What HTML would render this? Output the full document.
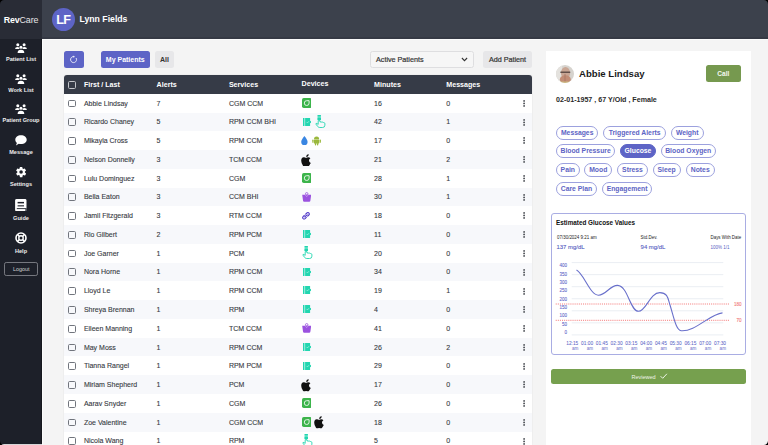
<!DOCTYPE html>
<html><head><meta charset="utf-8"><title>RevCare</title>
<style>
*{margin:0;padding:0;box-sizing:border-box}
html,body{width:768px;height:445px;overflow:hidden;background:#f4f4f4;font-family:"Liberation Sans",sans-serif}
.abs{position:absolute}
#side{position:absolute;left:0;top:0;width:42px;height:445px;background:#1d2029}
#logo{position:absolute;left:0;top:0;width:42px;height:38.6px;background:#292c36;color:#fff;font-size:8.9px;line-height:40px;text-align:center;letter-spacing:-0.15px}
.nicon{position:absolute;left:0;width:42px;text-align:center;line-height:0}
.nlab{position:absolute;left:0;width:42px;text-align:center;color:#ededed;font-size:5.6px;font-weight:700;line-height:8.6px;white-space:nowrap}
#logout{position:absolute;left:4.1px;top:262.2px;width:34.2px;height:14px;border:0.9px solid #76787f;border-radius:2.2px;color:#d0d0d2;font-size:5.4px;line-height:12.2px;text-align:center}
#head{position:absolute;left:42px;top:0;width:726px;height:38.6px;background:#3c414c}
#av{position:absolute;left:52px;top:7.6px;width:23px;height:23px;border-radius:50%;background:#5d64c6;color:#fff;font-weight:700;font-size:12.6px;line-height:24px;text-align:center;letter-spacing:-0.6px;text-indent:-0.5px}
#uname{position:absolute;left:79.5px;top:13px;color:#fff;font-weight:700;font-size:8.7px;line-height:12px}
.btn{position:absolute;top:51px;height:17px;border-radius:2.5px;font-size:7px;line-height:17px;text-align:center}
#tbl{position:absolute;left:64px;top:75px;width:468px;height:370px;background:#fff;border-radius:3px 3px 0 0;overflow:hidden;box-shadow:0 0 1.5px rgba(0,0,0,0.12)}
#th{position:absolute;left:0;top:0;width:468px;height:18.765px;background:#363b47;color:#fff;font-weight:700;font-size:7.1px}
.row{position:absolute;left:0;width:468px;height:18.765px;color:#353840;font-size:7px;-webkit-text-stroke:0.1px #353840}
.row span,#th span{position:absolute;top:0.85px;line-height:18.765px;white-space:nowrap}
.cb{left:4.3px;top:5.8px!important;width:7.7px;height:7.8px;border:1px solid #71757d;border-radius:1.6px;}
#th .cb{border-color:#c3c5ca}
.c1{left:19.9px} .c2{left:92.6px} .c3{left:164.9px} .c4{left:237.6px;top:-0.3px!important;display:flex;align-items:center;height:18.765px;gap:3.5px} .c5{left:310.1px} .c6{left:382.3px}
.ic{display:block}
.kb{left:458.9px;top:6.1px!important;width:2.2px;height:7px;line-height:0!important}
.kb i{display:block;width:1.9px;height:1.7px;background:#45484f;border-radius:0.4px;margin-bottom:0.8px}
#panel{position:absolute;left:546px;top:51px;width:205px;height:394px;background:#fff}
.chip{position:absolute;height:14px;border:1px solid #9ca1de;border-radius:7px;color:#5d64c4;font-size:6.8px;font-weight:700;line-height:12.8px;text-align:center;white-space:nowrap}
.chip.on{background:#5d64c6;border-color:#5d64c6;color:#fff}
#card{position:absolute;left:550.8px;top:212.9px;width:195.2px;height:142.6px;border:1px solid #a9ade3;border-radius:3px;background:#fff}
</style></head><body>
<div id="side">
<div id="logo"><b>Rev</b><span style="color:#e6e6e8">Care</span></div>
<div class="nicon" style="top:43px"><svg width="12" height="10" viewBox="0 0 12 10" style="margin-left:-0.3px"><g fill="#fff"><circle cx="2.8" cy="1.75" r="1.5"/><circle cx="9.1" cy="1.75" r="1.5"/><path d="M0.1 6.1 A2.45 2.15 0 0 1 5.0 6.1 Z"/><path d="M7.0 6.1 A2.45 2.15 0 0 1 11.9 6.1 Z"/></g><g fill="#fff" stroke="#1d2029" stroke-width="1.1" paint-order="stroke fill"><circle cx="5.95" cy="4.3" r="1.5"/><path d="M2.6 9.9 Q2.6 6.8 5.95 6.8 Q9.3 6.8 9.3 9.9 Z"/></g></svg></div><div class="nlab" style="top:55px">Patient List</div>
<div class="nicon" style="top:74px"><svg width="12" height="10" viewBox="0 0 12 10" style="margin-left:-0.3px"><g fill="#fff"><circle cx="2.8" cy="1.75" r="1.5"/><circle cx="9.1" cy="1.75" r="1.5"/><path d="M0.1 6.1 A2.45 2.15 0 0 1 5.0 6.1 Z"/><path d="M7.0 6.1 A2.45 2.15 0 0 1 11.9 6.1 Z"/></g><g fill="#fff" stroke="#1d2029" stroke-width="1.1" paint-order="stroke fill"><circle cx="5.95" cy="4.3" r="1.5"/><path d="M2.6 9.9 Q2.6 6.8 5.95 6.8 Q9.3 6.8 9.3 9.9 Z"/></g></svg></div><div class="nlab" style="top:85.5px">Work List</div>
<div class="nicon" style="top:103.5px"><svg width="12" height="10" viewBox="0 0 12 10" style="margin-left:-0.3px"><g fill="#fff"><circle cx="2.8" cy="1.75" r="1.5"/><circle cx="9.1" cy="1.75" r="1.5"/><path d="M0.1 6.1 A2.45 2.15 0 0 1 5.0 6.1 Z"/><path d="M7.0 6.1 A2.45 2.15 0 0 1 11.9 6.1 Z"/></g><g fill="#fff" stroke="#1d2029" stroke-width="1.1" paint-order="stroke fill"><circle cx="5.95" cy="4.3" r="1.5"/><path d="M2.6 9.9 Q2.6 6.8 5.95 6.8 Q9.3 6.8 9.3 9.9 Z"/></g></svg></div><div class="nlab" style="top:115.5px">Patient Group</div>
<div class="nicon" style="top:134.5px"><svg width="12" height="11" viewBox="0 0 12 11"><path d="M6 0.3 C9.3 0.3 11.7 2.3 11.7 4.7 C11.7 7.1 9.3 9.1 6 9.1 C5.2 9.1 4.5 9 3.8 8.8 L0.9 10.5 L1.9 8 C0.9 7.1 0.3 6 0.3 4.7 C0.3 2.3 2.7 0.3 6 0.3 Z" fill="#fff"/></svg></div><div class="nlab" style="top:148px">Message</div>
<div class="nicon" style="top:165.5px"><svg width="12.2" height="12.2" viewBox="0 0 24 24"><path fill="#fff" d="M19.4 13a7.6 7.6 0 0 0 0-2l2.1-1.6a.5.5 0 0 0 .1-.6l-2-3.5a.5.5 0 0 0-.6-.2l-2.5 1a7.3 7.3 0 0 0-1.7-1L14.4 2.4A.5.5 0 0 0 14 2h-4a.5.5 0 0 0-.5.4L9.1 5.1a7.3 7.3 0 0 0-1.7 1l-2.5-1a.5.5 0 0 0-.6.2l-2 3.5a.5.5 0 0 0 .1.6L4.6 11a7.6 7.6 0 0 0 0 2l-2.1 1.6a.5.5 0 0 0-.1.6l2 3.5a.5.5 0 0 0 .6.2l2.5-1a7.3 7.3 0 0 0 1.7 1l.4 2.7a.5.5 0 0 0 .5.4h4a.5.5 0 0 0 .5-.4l.4-2.7a7.3 7.3 0 0 0 1.7-1l2.5 1a.5.5 0 0 0 .6-.2l2-3.5a.5.5 0 0 0-.1-.6zM12 15.5A3.5 3.5 0 1 1 15.5 12 3.5 3.5 0 0 1 12 15.5z"/></svg></div><div class="nlab" style="top:180px">Settings</div>
<div class="nicon" style="top:198.8px"><svg width="11.6" height="12.4" viewBox="0 0 11.6 12.4"><path d="M1.6 0 H10 Q11.5 0 11.5 1.5 V12.3 H1.6 Q0.1 12.3 0.1 10.8 V1.5 Q0.1 0 1.6 0 Z" fill="#fff"/><rect x="2.6" y="2.9" width="6.4" height="1.5" fill="#1d2029"/><rect x="2.6" y="6.3" width="6.4" height="1.1" fill="#1d2029"/><rect x="1.8" y="9.2" width="9.8" height="0.9" fill="#1d2029"/><rect x="10.4" y="10.1" width="1.2" height="2.3" fill="#1d2029"/></svg></div><div class="nlab" style="top:214px">Guide</div>
<div class="nicon" style="top:231.8px"><svg width="12" height="12" viewBox="0 0 12 12"><circle cx="6" cy="6" r="5" fill="none" stroke="#fff" stroke-width="1.6"/><circle cx="6" cy="6" r="2.2" fill="none" stroke="#fff" stroke-width="1.4"/><path d="M2.6 2.6 L4.4 4.4 M9.4 2.6 L7.6 4.4 M2.6 9.4 L4.4 7.6 M9.4 9.4 L7.6 7.6" stroke="#fff" stroke-width="1.4"/></svg></div><div class="nlab" style="top:246.5px">Help</div>

<div id="logout">Logout</div>
</div>
<div id="head"></div><div class="abs" style="left:42px;top:38.6px;width:726px;height:1px;background:#fbfbfb"></div><div class="abs" style="left:42px;top:38.6px;width:1px;height:407px;background:#fbfbfb"></div><div class="abs" style="left:40.9px;top:38.6px;width:1.1px;height:407px;background:#15171d"></div><div class="abs" style="left:42px;top:37px;width:726px;height:1.6px;background:#363a45"></div>
<div id="av">LF</div>
<div id="uname">Lynn Fields</div>

<div class="btn" style="left:64px;width:20.2px;background:#5d64c6;line-height:0">
<svg width="20.2" height="17" viewBox="0 0 20.2 17"><path d="M9.6 5.6 A3 3 0 1 0 12.1 7.0" fill="none" stroke="#e9eaf8" stroke-width="0.95"/><circle cx="9.7" cy="5.6" r="0.95" fill="#e9eaf8"/></svg></div>
<div class="btn" style="left:100.5px;width:49.5px;background:#5d64c6;color:#fff;font-weight:700">My Patients</div>
<div class="btn" style="left:155px;width:19px;background:#e7e7e9;color:#333;font-weight:700">All</div>
<div class="btn" style="left:369.5px;width:104px;background:#f6f6f6;border:1px solid #dedee0;color:#333;text-align:left;padding-left:5.5px;line-height:15px;font-size:7.2px;-webkit-text-stroke:0.2px #333">Active Patients
<svg style="position:absolute;left:90.5px;top:5.2px" width="7" height="5" viewBox="0 0 7 5"><path d="M0.9 1 L3.5 3.6 L6.1 1" fill="none" stroke="#333" stroke-width="1.1"/></svg></div>
<div class="btn" style="left:483px;width:49px;background:#e7e7e9;color:#333;font-size:7.2px;-webkit-text-stroke:0.2px #333">Add Patient</div>

<div id="tbl">
<div id="th"><span class="cb"></span><span class="c1">First / Last</span><span class="c2">Alerts</span><span class="c3">Services</span><span class="c4">Devices</span><span class="c5">Minutes</span><span class="c6">Messages</span></div>
<div class="row" style="top:18.77px;background:#ffffff"><span class="cb"></span><span class="c1">Abbie Lindsay</span><span class="c2">7</span><span class="c3">CGM CCM</span><span class="c4"><svg class="ic" width="9.6" height="10" viewBox="0 0 9.6 10"><rect x="0" y="0" width="9.6" height="10" rx="1.7" fill="#3cb44b"/><path d="M4.7 2.7 H7.1 V5.1 A2.4 2.4 0 1 1 4.7 2.7 Z" fill="none" stroke="#e8f6ea" stroke-width="0.95"/></svg></span><span class="c5">16</span><span class="c6">0</span><span class="kb"><svg width="2.2" height="7" viewBox="0 0 2.2 7"><circle cx="1.1" cy="0.95" r="0.9" fill="#45484f"/><circle cx="1.1" cy="3.45" r="0.9" fill="#45484f"/><circle cx="1.1" cy="5.95" r="0.9" fill="#45484f"/></svg></span></div>
<div class="row" style="top:37.53px;background:#f7f8fb"><span class="cb"></span><span class="c1">Ricardo Chaney</span><span class="c2">5</span><span class="c3">RPM CCM BHI</span><span class="c4"><svg class="ic" width="8.4" height="8" viewBox="0 0 8.4 8" style="margin-left:1.4px"><rect x="0" y="0" width="1.5" height="8" fill="#22d6b0"/><path d="M2.1 0 H7.1 V2.7 L8.3 3.4 V4.6 L7.1 5.3 V8 H2.1 Z" fill="#22d6b0"/><path d="M3.5 3.9 L4.5 4.9 L6 3.2" fill="none" stroke="#c8f5ea" stroke-width="0.6"/></svg><svg class="ic" width="10.5" height="13" viewBox="0 0 10.5 13" style="margin-left:0.5px"><rect x="2.4" y="0.1" width="3.6" height="1.6" rx="0.4" fill="#22d6b0"/><rect x="2.4" y="2.3" width="3.6" height="2.8" rx="0.4" fill="#22d6b0"/><path d="M3.2 5.6 V9.4 L1.9 8.5 Q0.6 8.1 0.9 9.1 L2.8 11.6 Q3.6 12.5 4.8 12.5 H7.6 Q9.9 12.5 9.9 10.2 V8.7 Q9.9 7.6 8.7 7.6 Q7.8 6.8 6.8 7.2 Q6.1 6.6 5 7 V5.6 Z" fill="none" stroke="#22d6b0" stroke-width="0.9"/></svg></span><span class="c5">42</span><span class="c6">1</span><span class="kb"><svg width="2.2" height="7" viewBox="0 0 2.2 7"><circle cx="1.1" cy="0.95" r="0.9" fill="#45484f"/><circle cx="1.1" cy="3.45" r="0.9" fill="#45484f"/><circle cx="1.1" cy="5.95" r="0.9" fill="#45484f"/></svg></span></div>
<div class="row" style="top:56.30px;background:#ffffff"><span class="cb"></span><span class="c1">Mikayla Cross</span><span class="c2">5</span><span class="c3">RPM CCM</span><span class="c4"><svg class="ic" width="6.8" height="9.4" viewBox="0 0 6.8 9.4" style="margin-left:-0.3px;margin-top:0.6px"><path d="M3.4 0.1 Q6.6 3.9 6.6 6.1 A3.2 3.2 0 0 1 0.2 6.1 Q0.2 3.9 3.4 0.1 Z" fill="#3a86e2"/></svg><svg class="ic" width="9.2" height="9.4" viewBox="0 0 9.2 9.4" style="margin-left:0.2px;margin-top:1px"><path d="M2 3.2 A2.6 2.6 0 0 1 7.2 3.2 Z" fill="#9ab83c"/><rect x="2" y="3.5" width="5.2" height="4.1" rx="0.5" fill="#9ab83c"/><rect x="0.3" y="3.6" width="1.3" height="3.2" rx="0.6" fill="#9ab83c"/><rect x="7.6" y="3.6" width="1.3" height="3.2" rx="0.6" fill="#9ab83c"/><rect x="2.9" y="7" width="1.3" height="2.4" rx="0.6" fill="#9ab83c"/><rect x="5" y="7" width="1.3" height="2.4" rx="0.6" fill="#9ab83c"/></svg></span><span class="c5">17</span><span class="c6">0</span><span class="kb"><svg width="2.2" height="7" viewBox="0 0 2.2 7"><circle cx="1.1" cy="0.95" r="0.9" fill="#45484f"/><circle cx="1.1" cy="3.45" r="0.9" fill="#45484f"/><circle cx="1.1" cy="5.95" r="0.9" fill="#45484f"/></svg></span></div>
<div class="row" style="top:75.06px;background:#f7f8fb"><span class="cb"></span><span class="c1">Nelson Donnelly</span><span class="c2">3</span><span class="c3">TCM CCM</span><span class="c4"><svg class="ic" width="10.2" height="12.8" viewBox="0 0 10.2 12.8" style="margin-top:1.6px;margin-left:-0.4px"><path d="M5.1 3.2 Q5.1 0.8 7.6 0.1 Q7.9 2.6 5.1 3.2 Z" fill="#111"/><path d="M5.1 3.9 Q3.9 3.2 2.7 3.3 Q0.2 3.6 0.2 6.8 Q0.3 9.6 2 11.7 Q2.8 12.6 3.7 12.3 Q4.4 12 5.1 12 Q5.8 12 6.5 12.3 Q7.4 12.6 8.1 11.7 Q9.2 10.4 9.8 9 Q8 8.2 8 6.5 Q8 5.1 9.4 4.3 Q8.5 3.2 7.1 3.3 Q6.1 3.3 5.1 3.9 Z" fill="#111"/></svg></span><span class="c5">21</span><span class="c6">2</span><span class="kb"><svg width="2.2" height="7" viewBox="0 0 2.2 7"><circle cx="1.1" cy="0.95" r="0.9" fill="#45484f"/><circle cx="1.1" cy="3.45" r="0.9" fill="#45484f"/><circle cx="1.1" cy="5.95" r="0.9" fill="#45484f"/></svg></span></div>
<div class="row" style="top:93.83px;background:#ffffff"><span class="cb"></span><span class="c1">Lulu Dominguez</span><span class="c2">3</span><span class="c3">CGM</span><span class="c4"><svg class="ic" width="9.6" height="10" viewBox="0 0 9.6 10"><rect x="0" y="0" width="9.6" height="10" rx="1.7" fill="#3cb44b"/><path d="M4.7 2.7 H7.1 V5.1 A2.4 2.4 0 1 1 4.7 2.7 Z" fill="none" stroke="#e8f6ea" stroke-width="0.95"/></svg></span><span class="c5">28</span><span class="c6">1</span><span class="kb"><svg width="2.2" height="7" viewBox="0 0 2.2 7"><circle cx="1.1" cy="0.95" r="0.9" fill="#45484f"/><circle cx="1.1" cy="3.45" r="0.9" fill="#45484f"/><circle cx="1.1" cy="5.95" r="0.9" fill="#45484f"/></svg></span></div>
<div class="row" style="top:112.59px;background:#f7f8fb"><span class="cb"></span><span class="c1">Bella Eaton</span><span class="c2">3</span><span class="c3">CCM BHI</span><span class="c4"><svg class="ic" width="9.4" height="10" viewBox="0 0 9.4 10" style="margin-top:0px"><circle cx="4.7" cy="1.8" r="1.25" fill="none" stroke="#9b52df" stroke-width="0.8"/><path d="M0.2 2.8 H9.2 L8.4 8.6 Q8.3 9.8 7.2 9.8 H2.2 Q1.1 9.8 1 8.6 Z" fill="#9b52df"/><path d="M3.4 3.2 L4.7 4.5 L6 3.2" fill="none" stroke="#e2cdf6" stroke-width="0.6"/></svg></span><span class="c5">30</span><span class="c6">1</span><span class="kb"><svg width="2.2" height="7" viewBox="0 0 2.2 7"><circle cx="1.1" cy="0.95" r="0.9" fill="#45484f"/><circle cx="1.1" cy="3.45" r="0.9" fill="#45484f"/><circle cx="1.1" cy="5.95" r="0.9" fill="#45484f"/></svg></span></div>
<div class="row" style="top:131.36px;background:#ffffff"><span class="cb"></span><span class="c1">Jamil Fitzgerald</span><span class="c2">3</span><span class="c3">RTM CCM</span><span class="c4"><svg class="ic" width="8" height="7.6" viewBox="0 0 8 7.6" style="margin-left:0.8px;margin-top:1.2px"><g fill="none" stroke="#5038c8" stroke-width="1.1" stroke-linecap="round"><path d="M3.7 2.2 L4.9 1 Q5.9 0.1 6.9 1 Q7.8 2 6.9 3 L5.7 4.2"/><path d="M4.3 5.4 L3.1 6.6 Q2.1 7.5 1.1 6.6 Q0.2 5.6 1.1 4.6 L2.3 3.4"/><path d="M2.8 4.8 L5.2 2.8"/></g></svg></span><span class="c5">18</span><span class="c6">0</span><span class="kb"><svg width="2.2" height="7" viewBox="0 0 2.2 7"><circle cx="1.1" cy="0.95" r="0.9" fill="#45484f"/><circle cx="1.1" cy="3.45" r="0.9" fill="#45484f"/><circle cx="1.1" cy="5.95" r="0.9" fill="#45484f"/></svg></span></div>
<div class="row" style="top:150.12px;background:#f7f8fb"><span class="cb"></span><span class="c1">Rio Gilbert</span><span class="c2">2</span><span class="c3">RPM PCM</span><span class="c4"><svg class="ic" width="8.4" height="8" viewBox="0 0 8.4 8" style="margin-left:1.4px"><rect x="0" y="0" width="1.5" height="8" fill="#22d6b0"/><path d="M2.1 0 H7.1 V2.7 L8.3 3.4 V4.6 L7.1 5.3 V8 H2.1 Z" fill="#22d6b0"/><path d="M3.5 3.9 L4.5 4.9 L6 3.2" fill="none" stroke="#c8f5ea" stroke-width="0.6"/></svg></span><span class="c5">11</span><span class="c6">0</span><span class="kb"><svg width="2.2" height="7" viewBox="0 0 2.2 7"><circle cx="1.1" cy="0.95" r="0.9" fill="#45484f"/><circle cx="1.1" cy="3.45" r="0.9" fill="#45484f"/><circle cx="1.1" cy="5.95" r="0.9" fill="#45484f"/></svg></span></div>
<div class="row" style="top:168.88px;background:#ffffff"><span class="cb"></span><span class="c1">Joe Garner</span><span class="c2">1</span><span class="c3">PCM</span><span class="c4"><svg class="ic" width="10.5" height="13" viewBox="0 0 10.5 13" style="margin-left:0.5px"><rect x="2.4" y="0.1" width="3.6" height="1.6" rx="0.4" fill="#22d6b0"/><rect x="2.4" y="2.3" width="3.6" height="2.8" rx="0.4" fill="#22d6b0"/><path d="M3.2 5.6 V9.4 L1.9 8.5 Q0.6 8.1 0.9 9.1 L2.8 11.6 Q3.6 12.5 4.8 12.5 H7.6 Q9.9 12.5 9.9 10.2 V8.7 Q9.9 7.6 8.7 7.6 Q7.8 6.8 6.8 7.2 Q6.1 6.6 5 7 V5.6 Z" fill="none" stroke="#22d6b0" stroke-width="0.9"/></svg></span><span class="c5">20</span><span class="c6">0</span><span class="kb"><svg width="2.2" height="7" viewBox="0 0 2.2 7"><circle cx="1.1" cy="0.95" r="0.9" fill="#45484f"/><circle cx="1.1" cy="3.45" r="0.9" fill="#45484f"/><circle cx="1.1" cy="5.95" r="0.9" fill="#45484f"/></svg></span></div>
<div class="row" style="top:187.65px;background:#f7f8fb"><span class="cb"></span><span class="c1">Nora Horne</span><span class="c2">1</span><span class="c3">RPM CCM</span><span class="c4"><svg class="ic" width="8.4" height="8" viewBox="0 0 8.4 8" style="margin-left:1.4px"><rect x="0" y="0" width="1.5" height="8" fill="#22d6b0"/><path d="M2.1 0 H7.1 V2.7 L8.3 3.4 V4.6 L7.1 5.3 V8 H2.1 Z" fill="#22d6b0"/><path d="M3.5 3.9 L4.5 4.9 L6 3.2" fill="none" stroke="#c8f5ea" stroke-width="0.6"/></svg></span><span class="c5">34</span><span class="c6">0</span><span class="kb"><svg width="2.2" height="7" viewBox="0 0 2.2 7"><circle cx="1.1" cy="0.95" r="0.9" fill="#45484f"/><circle cx="1.1" cy="3.45" r="0.9" fill="#45484f"/><circle cx="1.1" cy="5.95" r="0.9" fill="#45484f"/></svg></span></div>
<div class="row" style="top:206.42px;background:#ffffff"><span class="cb"></span><span class="c1">Lloyd Le</span><span class="c2">1</span><span class="c3">RPM CCM</span><span class="c4"><svg class="ic" width="8.4" height="8" viewBox="0 0 8.4 8" style="margin-left:1.4px"><rect x="0" y="0" width="1.5" height="8" fill="#22d6b0"/><path d="M2.1 0 H7.1 V2.7 L8.3 3.4 V4.6 L7.1 5.3 V8 H2.1 Z" fill="#22d6b0"/><path d="M3.5 3.9 L4.5 4.9 L6 3.2" fill="none" stroke="#c8f5ea" stroke-width="0.6"/></svg></span><span class="c5">19</span><span class="c6">1</span><span class="kb"><svg width="2.2" height="7" viewBox="0 0 2.2 7"><circle cx="1.1" cy="0.95" r="0.9" fill="#45484f"/><circle cx="1.1" cy="3.45" r="0.9" fill="#45484f"/><circle cx="1.1" cy="5.95" r="0.9" fill="#45484f"/></svg></span></div>
<div class="row" style="top:225.18px;background:#f7f8fb"><span class="cb"></span><span class="c1">Shreya Brennan</span><span class="c2">1</span><span class="c3">RPM</span><span class="c4"><svg class="ic" width="8.4" height="8" viewBox="0 0 8.4 8" style="margin-left:1.4px"><rect x="0" y="0" width="1.5" height="8" fill="#22d6b0"/><path d="M2.1 0 H7.1 V2.7 L8.3 3.4 V4.6 L7.1 5.3 V8 H2.1 Z" fill="#22d6b0"/><path d="M3.5 3.9 L4.5 4.9 L6 3.2" fill="none" stroke="#c8f5ea" stroke-width="0.6"/></svg></span><span class="c5">4</span><span class="c6">0</span><span class="kb"><svg width="2.2" height="7" viewBox="0 0 2.2 7"><circle cx="1.1" cy="0.95" r="0.9" fill="#45484f"/><circle cx="1.1" cy="3.45" r="0.9" fill="#45484f"/><circle cx="1.1" cy="5.95" r="0.9" fill="#45484f"/></svg></span></div>
<div class="row" style="top:243.94px;background:#ffffff"><span class="cb"></span><span class="c1">Eileen Manning</span><span class="c2">1</span><span class="c3">TCM CCM</span><span class="c4"><svg class="ic" width="9.4" height="10" viewBox="0 0 9.4 10" style="margin-top:0px"><circle cx="4.7" cy="1.8" r="1.25" fill="none" stroke="#9b52df" stroke-width="0.8"/><path d="M0.2 2.8 H9.2 L8.4 8.6 Q8.3 9.8 7.2 9.8 H2.2 Q1.1 9.8 1 8.6 Z" fill="#9b52df"/><path d="M3.4 3.2 L4.7 4.5 L6 3.2" fill="none" stroke="#e2cdf6" stroke-width="0.6"/></svg></span><span class="c5">41</span><span class="c6">0</span><span class="kb"><svg width="2.2" height="7" viewBox="0 0 2.2 7"><circle cx="1.1" cy="0.95" r="0.9" fill="#45484f"/><circle cx="1.1" cy="3.45" r="0.9" fill="#45484f"/><circle cx="1.1" cy="5.95" r="0.9" fill="#45484f"/></svg></span></div>
<div class="row" style="top:262.71px;background:#f7f8fb"><span class="cb"></span><span class="c1">May Moss</span><span class="c2">1</span><span class="c3">RPM CCM</span><span class="c4"><svg class="ic" width="8.4" height="8" viewBox="0 0 8.4 8" style="margin-left:1.4px"><rect x="0" y="0" width="1.5" height="8" fill="#22d6b0"/><path d="M2.1 0 H7.1 V2.7 L8.3 3.4 V4.6 L7.1 5.3 V8 H2.1 Z" fill="#22d6b0"/><path d="M3.5 3.9 L4.5 4.9 L6 3.2" fill="none" stroke="#c8f5ea" stroke-width="0.6"/></svg></span><span class="c5">26</span><span class="c6">2</span><span class="kb"><svg width="2.2" height="7" viewBox="0 0 2.2 7"><circle cx="1.1" cy="0.95" r="0.9" fill="#45484f"/><circle cx="1.1" cy="3.45" r="0.9" fill="#45484f"/><circle cx="1.1" cy="5.95" r="0.9" fill="#45484f"/></svg></span></div>
<div class="row" style="top:281.48px;background:#ffffff"><span class="cb"></span><span class="c1">Tianna Rangel</span><span class="c2">1</span><span class="c3">RPM PCM</span><span class="c4"><svg class="ic" width="8.4" height="8" viewBox="0 0 8.4 8" style="margin-left:1.4px"><rect x="0" y="0" width="1.5" height="8" fill="#22d6b0"/><path d="M2.1 0 H7.1 V2.7 L8.3 3.4 V4.6 L7.1 5.3 V8 H2.1 Z" fill="#22d6b0"/><path d="M3.5 3.9 L4.5 4.9 L6 3.2" fill="none" stroke="#c8f5ea" stroke-width="0.6"/></svg></span><span class="c5">29</span><span class="c6">0</span><span class="kb"><svg width="2.2" height="7" viewBox="0 0 2.2 7"><circle cx="1.1" cy="0.95" r="0.9" fill="#45484f"/><circle cx="1.1" cy="3.45" r="0.9" fill="#45484f"/><circle cx="1.1" cy="5.95" r="0.9" fill="#45484f"/></svg></span></div>
<div class="row" style="top:300.24px;background:#f7f8fb"><span class="cb"></span><span class="c1">Miriam Shepherd</span><span class="c2">1</span><span class="c3">PCM</span><span class="c4"><svg class="ic" width="10.2" height="12.8" viewBox="0 0 10.2 12.8" style="margin-top:1.6px;margin-left:-0.4px"><path d="M5.1 3.2 Q5.1 0.8 7.6 0.1 Q7.9 2.6 5.1 3.2 Z" fill="#111"/><path d="M5.1 3.9 Q3.9 3.2 2.7 3.3 Q0.2 3.6 0.2 6.8 Q0.3 9.6 2 11.7 Q2.8 12.6 3.7 12.3 Q4.4 12 5.1 12 Q5.8 12 6.5 12.3 Q7.4 12.6 8.1 11.7 Q9.2 10.4 9.8 9 Q8 8.2 8 6.5 Q8 5.1 9.4 4.3 Q8.5 3.2 7.1 3.3 Q6.1 3.3 5.1 3.9 Z" fill="#111"/></svg></span><span class="c5">17</span><span class="c6">0</span><span class="kb"><svg width="2.2" height="7" viewBox="0 0 2.2 7"><circle cx="1.1" cy="0.95" r="0.9" fill="#45484f"/><circle cx="1.1" cy="3.45" r="0.9" fill="#45484f"/><circle cx="1.1" cy="5.95" r="0.9" fill="#45484f"/></svg></span></div>
<div class="row" style="top:319.00px;background:#ffffff"><span class="cb"></span><span class="c1">Aarav Snyder</span><span class="c2">1</span><span class="c3">CGM</span><span class="c4"><svg class="ic" width="9.6" height="10" viewBox="0 0 9.6 10"><rect x="0" y="0" width="9.6" height="10" rx="1.7" fill="#3cb44b"/><path d="M4.7 2.7 H7.1 V5.1 A2.4 2.4 0 1 1 4.7 2.7 Z" fill="none" stroke="#e8f6ea" stroke-width="0.95"/></svg></span><span class="c5">26</span><span class="c6">0</span><span class="kb"><svg width="2.2" height="7" viewBox="0 0 2.2 7"><circle cx="1.1" cy="0.95" r="0.9" fill="#45484f"/><circle cx="1.1" cy="3.45" r="0.9" fill="#45484f"/><circle cx="1.1" cy="5.95" r="0.9" fill="#45484f"/></svg></span></div>
<div class="row" style="top:337.77px;background:#f7f8fb"><span class="cb"></span><span class="c1">Zoe Valentine</span><span class="c2">1</span><span class="c3">CGM CCM</span><span class="c4"><svg class="ic" width="9.6" height="10" viewBox="0 0 9.6 10"><rect x="0" y="0" width="9.6" height="10" rx="1.7" fill="#3cb44b"/><path d="M4.7 2.7 H7.1 V5.1 A2.4 2.4 0 1 1 4.7 2.7 Z" fill="none" stroke="#e8f6ea" stroke-width="0.95"/></svg><svg class="ic" width="10.2" height="12.8" viewBox="0 0 10.2 12.8" style="margin-top:1.6px;margin-left:-0.4px"><path d="M5.1 3.2 Q5.1 0.8 7.6 0.1 Q7.9 2.6 5.1 3.2 Z" fill="#111"/><path d="M5.1 3.9 Q3.9 3.2 2.7 3.3 Q0.2 3.6 0.2 6.8 Q0.3 9.6 2 11.7 Q2.8 12.6 3.7 12.3 Q4.4 12 5.1 12 Q5.8 12 6.5 12.3 Q7.4 12.6 8.1 11.7 Q9.2 10.4 9.8 9 Q8 8.2 8 6.5 Q8 5.1 9.4 4.3 Q8.5 3.2 7.1 3.3 Q6.1 3.3 5.1 3.9 Z" fill="#111"/></svg></span><span class="c5">18</span><span class="c6">0</span><span class="kb"><svg width="2.2" height="7" viewBox="0 0 2.2 7"><circle cx="1.1" cy="0.95" r="0.9" fill="#45484f"/><circle cx="1.1" cy="3.45" r="0.9" fill="#45484f"/><circle cx="1.1" cy="5.95" r="0.9" fill="#45484f"/></svg></span></div>
<div class="row" style="top:356.54px;background:#ffffff"><span class="cb"></span><span class="c1">Nicola Wang</span><span class="c2">1</span><span class="c3">RPM</span><span class="c4"><svg class="ic" width="10.5" height="13" viewBox="0 0 10.5 13" style="margin-left:0.5px"><rect x="2.4" y="0.1" width="3.6" height="1.6" rx="0.4" fill="#22d6b0"/><rect x="2.4" y="2.3" width="3.6" height="2.8" rx="0.4" fill="#22d6b0"/><path d="M3.2 5.6 V9.4 L1.9 8.5 Q0.6 8.1 0.9 9.1 L2.8 11.6 Q3.6 12.5 4.8 12.5 H7.6 Q9.9 12.5 9.9 10.2 V8.7 Q9.9 7.6 8.7 7.6 Q7.8 6.8 6.8 7.2 Q6.1 6.6 5 7 V5.6 Z" fill="none" stroke="#22d6b0" stroke-width="0.9"/></svg></span><span class="c5">5</span><span class="c6">0</span><span class="kb"><svg width="2.2" height="7" viewBox="0 0 2.2 7"><circle cx="1.1" cy="0.95" r="0.9" fill="#45484f"/><circle cx="1.1" cy="3.45" r="0.9" fill="#45484f"/><circle cx="1.1" cy="5.95" r="0.9" fill="#45484f"/></svg></span></div>
</div>

<div id="panel"></div>
<svg class="abs" style="left:556px;top:65px" width="18" height="18" viewBox="0 0 18 18"><defs><clipPath id="avc"><circle cx="9" cy="9" r="9"/></clipPath><filter id="avb"><feGaussianBlur stdDeviation="0.5"/></filter></defs><g clip-path="url(#avc)"><rect width="18" height="18" fill="#d6d3ce"/><g filter="url(#avb)"><rect x="0" y="0" width="6" height="18" fill="#e4e2de"/><ellipse cx="9.5" cy="8" rx="4.6" ry="6" fill="#c9a694"/><ellipse cx="9.3" cy="14.5" rx="5.5" ry="4.2" fill="#c28d76"/><rect x="4.2" y="6.5" width="10.2" height="1.4" rx="0.6" fill="#4a3a36" opacity="0.8"/><rect x="8.6" y="9" width="0.8" height="9" fill="#a57361"/><rect x="0" y="16.5" width="18" height="2" fill="#cdb87e"/></g></g></svg>
<div class="abs" style="left:579px;top:68px;font-size:9.6px;font-weight:700;color:#1a1a1a;line-height:12px">Abbie Lindsay</div>
<div class="abs" style="left:706px;top:65.3px;width:34.8px;height:17.1px;background:#76994f;border-radius:2.5px;color:#f4f8f0;font-size:6.6px;font-weight:700;line-height:17.6px;text-align:center">Call</div>
<div class="abs" style="left:556px;top:95.8px;font-size:7.1px;font-weight:700;color:#2a2a2a;line-height:9px;white-space:nowrap">02-01-1957 , 67 Y/Old , Female</div>
<div class="chip" style="left:556px;top:125.5px;width:42.4px">Messages</div><div class="chip" style="left:603.3px;top:125.5px;width:62.7px">Triggered Alerts</div><div class="chip" style="left:670.6px;top:125.5px;width:33.1px">Weight</div><div class="chip" style="left:556px;top:144.2px;width:59.2px">Blood Pressure</div><div class="chip on" style="left:620px;top:144.2px;width:36.0px">Glucose</div><div class="chip" style="left:661px;top:144.2px;width:54.5px">Blood Oxygen</div><div class="chip" style="left:556px;top:162.9px;width:23.6px">Pain</div><div class="chip" style="left:584.2px;top:162.9px;width:28.1px">Mood</div><div class="chip" style="left:617px;top:162.9px;width:31.0px">Stress</div><div class="chip" style="left:652.6px;top:162.9px;width:28.0px">Sleep</div><div class="chip" style="left:685.7px;top:162.9px;width:29.1px">Notes</div><div class="chip" style="left:556px;top:181.6px;width:40.8px">Care Plan</div><div class="chip" style="left:602px;top:181.6px;width:50.2px">Engagement</div>
<div id="card"></div>
<div class="abs" style="left:556px;top:218.6px;font-size:6.35px;font-weight:700;color:#111;line-height:8px;white-space:nowrap">Estimated Glucose Values</div>
<div class="abs" style="left:557px;top:234.9px;font-size:4.46px;color:#222;line-height:6px;white-space:nowrap">07/30/2024 9:21 am</div>
<div class="abs" style="left:640.6px;top:234.9px;font-size:4.46px;color:#222;line-height:6px;white-space:nowrap">Std.Dev.</div>
<div class="abs" style="left:710.5px;top:234.9px;font-size:4.42px;color:#222;line-height:6px;white-space:nowrap">Days With Date</div>
<div class="abs" style="left:556.5px;top:243.2px;font-size:5.95px;color:#555dc2;-webkit-text-stroke:0.1px #555dc2;line-height:8px;white-space:nowrap">137 mg/dL</div>
<div class="abs" style="left:640.6px;top:243.2px;font-size:5.95px;color:#555dc2;-webkit-text-stroke:0.1px #555dc2;line-height:8px;white-space:nowrap">94 mg/dL</div>
<div class="abs" style="left:710.5px;top:244.5px;font-size:4.5px;color:#5a62c4;line-height:6px;white-space:nowrap">100% 1/1</div>
<svg class="abs" style="left:0;top:0" width="768" height="445" viewBox="0 0 768 445"><line x1="571.7" y1="262.6" x2="723.3" y2="262.6" stroke="#eaeef3" stroke-width="1"/><line x1="571.7" y1="274.65000000000003" x2="723.3" y2="274.65000000000003" stroke="#eaeef3" stroke-width="1"/><line x1="571.7" y1="286.70000000000005" x2="723.3" y2="286.70000000000005" stroke="#eaeef3" stroke-width="1"/><line x1="571.7" y1="298.75" x2="723.3" y2="298.75" stroke="#eaeef3" stroke-width="1"/><line x1="571.7" y1="310.8" x2="723.3" y2="310.8" stroke="#eaeef3" stroke-width="1"/><line x1="571.7" y1="322.85" x2="723.3" y2="322.85" stroke="#eaeef3" stroke-width="1"/><line x1="571.7" y1="334.90000000000003" x2="723.3" y2="334.90000000000003" stroke="#eaeef3" stroke-width="1"/><text x="567" y="266.90000000000003" text-anchor="end" font-size="4.5" fill="#5d65c7" stroke="#5d65c7" stroke-width="0.08" font-family="Liberation Sans">400</text><text x="567" y="275.5" text-anchor="end" font-size="4.5" fill="#5d65c7" stroke="#5d65c7" stroke-width="0.08" font-family="Liberation Sans">350</text><text x="567" y="284.0" text-anchor="end" font-size="4.5" fill="#5d65c7" stroke="#5d65c7" stroke-width="0.08" font-family="Liberation Sans">300</text><text x="567" y="292.3" text-anchor="end" font-size="4.5" fill="#5d65c7" stroke="#5d65c7" stroke-width="0.08" font-family="Liberation Sans">250</text><text x="567" y="300.6" text-anchor="end" font-size="4.5" fill="#5d65c7" stroke="#5d65c7" stroke-width="0.08" font-family="Liberation Sans">200</text><text x="567" y="309.1" text-anchor="end" font-size="4.5" fill="#5d65c7" stroke="#5d65c7" stroke-width="0.08" font-family="Liberation Sans">150</text><text x="567" y="317.40000000000003" text-anchor="end" font-size="4.5" fill="#5d65c7" stroke="#5d65c7" stroke-width="0.08" font-family="Liberation Sans">100</text><text x="567" y="325.6" text-anchor="end" font-size="4.5" fill="#5d65c7" stroke="#5d65c7" stroke-width="0.08" font-family="Liberation Sans">50</text><text x="567" y="334.20000000000005" text-anchor="end" font-size="4.5" fill="#5d65c7" stroke="#5d65c7" stroke-width="0.08" font-family="Liberation Sans">0</text><text x="578.30" y="344.8" text-anchor="end" font-size="4.8" fill="#6168c8" stroke="#6168c8" stroke-width="0.05" font-family="Liberation Sans">12:15</text><text x="578.30" y="349.8" text-anchor="end" font-size="4.6" fill="#7a80d0" stroke="#7a80d0" stroke-width="0.05" font-family="Liberation Sans">am</text><text x="593.07" y="344.8" text-anchor="end" font-size="4.8" fill="#6168c8" stroke="#6168c8" stroke-width="0.05" font-family="Liberation Sans">01:00</text><text x="593.07" y="349.8" text-anchor="end" font-size="4.6" fill="#7a80d0" stroke="#7a80d0" stroke-width="0.05" font-family="Liberation Sans">am</text><text x="607.84" y="344.8" text-anchor="end" font-size="4.8" fill="#6168c8" stroke="#6168c8" stroke-width="0.05" font-family="Liberation Sans">01:45</text><text x="607.84" y="349.8" text-anchor="end" font-size="4.6" fill="#7a80d0" stroke="#7a80d0" stroke-width="0.05" font-family="Liberation Sans">am</text><text x="622.61" y="344.8" text-anchor="end" font-size="4.8" fill="#6168c8" stroke="#6168c8" stroke-width="0.05" font-family="Liberation Sans">02:30</text><text x="622.61" y="349.8" text-anchor="end" font-size="4.6" fill="#7a80d0" stroke="#7a80d0" stroke-width="0.05" font-family="Liberation Sans">am</text><text x="637.38" y="344.8" text-anchor="end" font-size="4.8" fill="#6168c8" stroke="#6168c8" stroke-width="0.05" font-family="Liberation Sans">03:15</text><text x="637.38" y="349.8" text-anchor="end" font-size="4.6" fill="#7a80d0" stroke="#7a80d0" stroke-width="0.05" font-family="Liberation Sans">am</text><text x="652.15" y="344.8" text-anchor="end" font-size="4.8" fill="#6168c8" stroke="#6168c8" stroke-width="0.05" font-family="Liberation Sans">04:00</text><text x="652.15" y="349.8" text-anchor="end" font-size="4.6" fill="#7a80d0" stroke="#7a80d0" stroke-width="0.05" font-family="Liberation Sans">am</text><text x="666.92" y="344.8" text-anchor="end" font-size="4.8" fill="#6168c8" stroke="#6168c8" stroke-width="0.05" font-family="Liberation Sans">04:45</text><text x="666.92" y="349.8" text-anchor="end" font-size="4.6" fill="#7a80d0" stroke="#7a80d0" stroke-width="0.05" font-family="Liberation Sans">am</text><text x="681.69" y="344.8" text-anchor="end" font-size="4.8" fill="#6168c8" stroke="#6168c8" stroke-width="0.05" font-family="Liberation Sans">05:30</text><text x="681.69" y="349.8" text-anchor="end" font-size="4.6" fill="#7a80d0" stroke="#7a80d0" stroke-width="0.05" font-family="Liberation Sans">am</text><text x="696.46" y="344.8" text-anchor="end" font-size="4.8" fill="#6168c8" stroke="#6168c8" stroke-width="0.05" font-family="Liberation Sans">06:15</text><text x="696.46" y="349.8" text-anchor="end" font-size="4.6" fill="#7a80d0" stroke="#7a80d0" stroke-width="0.05" font-family="Liberation Sans">am</text><text x="711.23" y="344.8" text-anchor="end" font-size="4.8" fill="#6168c8" stroke="#6168c8" stroke-width="0.05" font-family="Liberation Sans">07:00</text><text x="711.23" y="349.8" text-anchor="end" font-size="4.6" fill="#7a80d0" stroke="#7a80d0" stroke-width="0.05" font-family="Liberation Sans">am</text><text x="726.00" y="344.8" text-anchor="end" font-size="4.8" fill="#6168c8" stroke="#6168c8" stroke-width="0.05" font-family="Liberation Sans">07:30</text><text x="726.00" y="349.8" text-anchor="end" font-size="4.6" fill="#7a80d0" stroke="#7a80d0" stroke-width="0.05" font-family="Liberation Sans">am</text><line x1="555.7" y1="304" x2="729.7" y2="304" stroke="#f47a7a" stroke-width="1" stroke-dasharray="1.05,1.05"/><line x1="555.7" y1="320.3" x2="729.7" y2="320.3" stroke="#f47a7a" stroke-width="1" stroke-dasharray="1.05,1.05"/><text x="734" y="305.7" font-size="4.5" fill="#f07474" stroke="#f07474" stroke-width="0.08" font-family="Liberation Sans">180</text><text x="736.5" y="321.9" font-size="4.5" fill="#f07474" stroke="#f07474" stroke-width="0.08" font-family="Liberation Sans">70</text><path d="M576.5 270.1 C584 274 590 295 598.4 295.2 C606 295.4 610 285 617.6 285.4 C628 286 630 311 638.4 311.3 C646 311.6 650 292.6 659.8 292.6 C668 292.6 668 299 670 305 C674 318 676 330 681.1 330.7 C695 332 710 314 722.5 312.9" fill="none" stroke="#6970cb" stroke-width="1.1"/></svg>
<div class="abs" style="left:551px;top:368.6px;width:195px;height:15.9px;background:#76a04e;border-radius:2.5px;color:#eef5e8;font-size:5.5px;line-height:17px;text-align:center;padding-left:2px">Reviewed <svg width="7.5" height="6.2" viewBox="0 0 7.5 6.2" style="vertical-align:-0.3px;margin-left:3px"><path d="M0.6 3.2 L2.7 5.3 L6.9 0.8" fill="none" stroke="#eef5e8" stroke-width="1"/></svg></div>
<div class="abs" style="left:0;top:443.7px;width:42px;height:1.3px;background:#d6d6d8"></div>
<svg class="abs" style="left:0;top:0" width="768" height="445" viewBox="0 0 768 445"><g fill="#000"><path d="M0 0 H4.2 A4.2 4.2 0 0 0 0 4.2 Z"/><path d="M768 0 V4.2 A4.2 4.2 0 0 0 763.8 0 Z"/><path d="M0 445 V440.8 A4.2 4.2 0 0 0 4.2 445 Z"/><path d="M768 445 H763.8 A4.2 4.2 0 0 0 768 440.8 Z"/></g></svg>
</body></html>
